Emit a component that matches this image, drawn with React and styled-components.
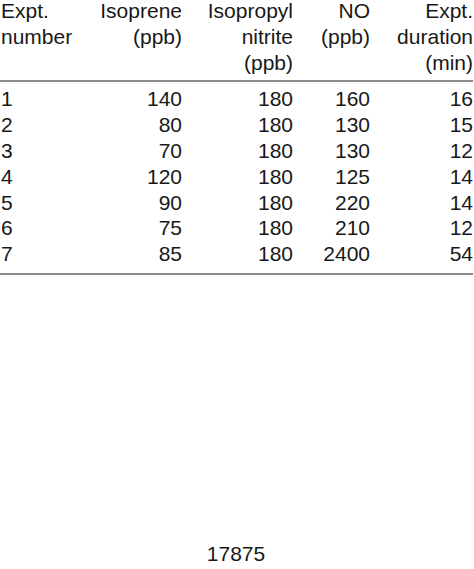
import React from "react";
import styled, { createGlobalStyle } from "styled-components";

const Global = createGlobalStyle`
  html, body { margin: 0; padding: 0; background: #fff; }
  body { font-family: "Liberation Sans", Arial, sans-serif; color: #181818; }
`;

const Page = styled.div`
  width: 474px;
  height: 569px;
  overflow: hidden;
  display: flex;
  flex-direction: column;
`;

const Table = styled.div`
  margin-top: -2px;
  font-size: 21px;
  line-height: 25.8px;
`;

const Row = styled.div`
  display: grid;
  grid-template-columns: 99px 82px 111px 77px 103px;
  padding-left: 1px;
`;

const HeadRow = styled(Row)`
  padding-bottom: 4.6px;
`;

const Body = styled.div`
  padding-top: 4.5px;
  padding-bottom: 6px;
`;

const Cell = styled.div`
  text-align: ${(p) => (p.$left ? "left" : "right")};
  white-space: nowrap;
`;

const Rule = styled.div`
  height: 2px;
  background: #8c8c8c;
  width: 473px;
`;

const Footer = styled.div`
  margin-top: 266px;
  text-align: center;
  font-size: 21px;
  line-height: 25.8px;
  padding-right: 2px;
`;

const headers = [
  ["Expt.", "number"],
  ["Isoprene", "(ppb)"],
  ["Isopropyl", "nitrite", "(ppb)"],
  ["NO", "(ppb)"],
  ["Expt.", "duration", "(min)"],
];

const rows = [
  ["1", "140", "180", "160", "16"],
  ["2", "80", "180", "130", "15"],
  ["3", "70", "180", "130", "12"],
  ["4", "120", "180", "125", "14"],
  ["5", "90", "180", "220", "14"],
  ["6", "75", "180", "210", "12"],
  ["7", "85", "180", "2400", "54"],
];

export default function App() {
  return (
    <Page>
      <Global />
      <Table>
        <HeadRow>
          {headers.map((lines, i) => (
            <Cell key={i} $left={i === 0}>
              {lines.map((l, j) => (
                <div key={j}>{l}</div>
              ))}
            </Cell>
          ))}
        </HeadRow>
        <Rule />
        <Body>
          {rows.map((r, i) => (
            <Row key={i}>
              {r.map((v, j) => (
                <Cell key={j} $left={j === 0}>
                  {v}
                </Cell>
              ))}
            </Row>
          ))}
        </Body>
        <Rule />
      </Table>
      <Footer>17875</Footer>
    </Page>
  );
}
